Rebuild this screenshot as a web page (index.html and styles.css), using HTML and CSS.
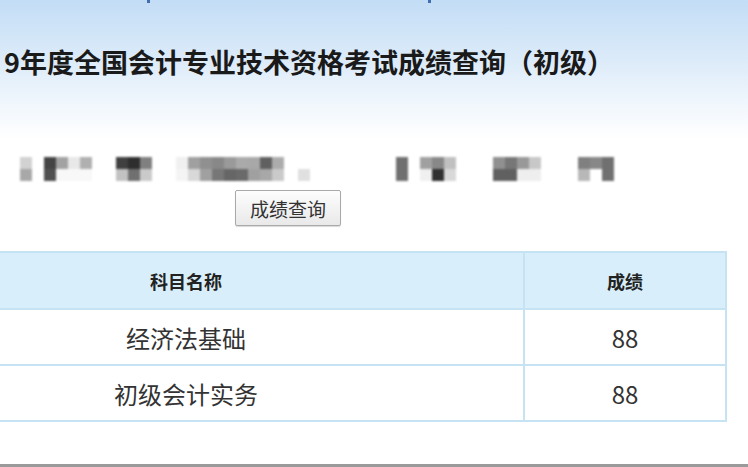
FILE: index.html
```html
<!DOCTYPE html>
<html lang="zh-CN">
<head>
    <meta charset="UTF-8">
    <meta name="viewport" content="width=device-width, initial-scale=1.0">
    <title>成绩查询</title>
    <link rel="stylesheet" href="styles.css">
</head>
<body>

    <div class="top">
        <div class="top-edge"></div>
        <h1 class="title">9年度全国会计专业技术资格考试成绩查询（初级）</h1>
    </div>

    <div class="query">
        <!-- 打码的考生信息 -->
        <svg class="mosaic" width="620" height="26" viewBox="0 0 620 26">
            <g>
                <rect x="20" y="1" width="12" height="12" fill="#d2d2d2"/>
                <rect x="20" y="13" width="12" height="12" fill="#a8a8a8"/>
                <rect x="44" y="1" width="12" height="12" fill="#444"/>
                <rect x="44" y="13" width="12" height="12" fill="#505050"/>
                <rect x="56" y="1" width="12" height="12" fill="#a2a2a2"/>
                <rect x="68" y="1" width="12" height="12" fill="#e8e8e8"/>
                <rect x="80" y="1" width="12" height="12" fill="#b0b0b0"/>
                <rect x="56" y="13" width="36" height="12" fill="#f8f8f8"/>

                <rect x="116" y="1" width="12" height="12" fill="#404040"/>
                <rect x="128" y="1" width="12" height="12" fill="#2e2e2e"/>
                <rect x="140" y="1" width="12" height="12" fill="#808080"/>
                <rect x="116" y="13" width="12" height="12" fill="#c2c2c2"/>
                <rect x="128" y="13" width="12" height="12" fill="#707070"/>
                <rect x="140" y="13" width="12" height="12" fill="#cacaca"/>

                <rect x="176" y="1" width="12" height="12" fill="#f0f0f0"/>
                <rect x="188" y="1" width="12" height="12" fill="#a0a0a0"/>
                <rect x="200" y="1" width="12" height="12" fill="#909090"/>
                <rect x="212" y="1" width="12" height="12" fill="#888"/>
                <rect x="224" y="1" width="12" height="12" fill="#9a9a9a"/>
                <rect x="236" y="1" width="12" height="12" fill="#aaa"/>
                <rect x="248" y="1" width="12" height="12" fill="#a8a8a8"/>
                <rect x="260" y="1" width="12" height="12" fill="#606060"/>
                <rect x="272" y="1" width="12" height="12" fill="#acacac"/>
                <rect x="176" y="13" width="12" height="12" fill="#f4f4f4"/>
                <rect x="188" y="13" width="12" height="12" fill="#d8d8d8"/>
                <rect x="200" y="13" width="12" height="12" fill="#a0a0a0"/>
                <rect x="212" y="13" width="12" height="12" fill="#777"/>
                <rect x="224" y="13" width="12" height="12" fill="#666"/>
                <rect x="236" y="13" width="12" height="12" fill="#6a6a6a"/>
                <rect x="248" y="13" width="12" height="12" fill="#a0a0a0"/>
                <rect x="260" y="13" width="12" height="12" fill="#a8a8a8"/>
                <rect x="272" y="13" width="12" height="12" fill="#cacaca"/>
                <rect x="298" y="13" width="12" height="12" fill="#e0e0e0"/>

                <rect x="396" y="1" width="12" height="24" fill="#707070"/>
                <rect x="420" y="1" width="12" height="12" fill="#a0a0a0"/>
                <rect x="432" y="1" width="12" height="12" fill="#888"/>
                <rect x="444" y="1" width="12" height="12" fill="#c0c0c0"/>
                <rect x="420" y="13" width="12" height="12" fill="#f0f0f0"/>
                <rect x="432" y="13" width="12" height="12" fill="#303030"/>
                <rect x="444" y="13" width="12" height="12" fill="#d8d8d8"/>

                <rect x="493" y="1" width="12" height="12" fill="#909090"/>
                <rect x="505" y="1" width="12" height="12" fill="#777"/>
                <rect x="517" y="1" width="12" height="12" fill="#999"/>
                <rect x="529" y="1" width="12" height="12" fill="#c8c8c8"/>
                <rect x="493" y="13" width="24" height="12" fill="#606060"/>
                <rect x="517" y="13" width="24" height="12" fill="#eee"/>

                <rect x="578" y="1" width="12" height="12" fill="#808080"/>
                <rect x="590" y="1" width="12" height="12" fill="#888"/>
                <rect x="602" y="1" width="12" height="24" fill="#707070"/>
                <rect x="578" y="13" width="12" height="12" fill="#b8b8b8"/>
            </g>
        </svg>
        <button class="btn">成绩查询</button>
    </div>

    <table class="scores">
        <thead>
            <tr>
                <th class="subject">科目名称</th>
                <th>成绩</th>
            </tr>
        </thead>
        <tbody>
            <tr>
                <td>经济法基础</td>
                <td>88</td>
            </tr>
            <tr>
                <td>初级会计实务</td>
                <td>88</td>
            </tr>
        </tbody>
    </table>

    <div class="footer-line"></div>

</body>
</html>
```

FILE: styles.css
```css
body {
    margin: 0;
    padding: 0;
    overflow: hidden;
    font-family: "Noto Sans CJK SC", "Liberation Sans", sans-serif;
    color: #222;
    background: #fff;
}
.top {
    height: 140px;
    background: linear-gradient(#c3ddf6 0, #dcebf9 60px, #f3f8fd 110px, #fff 140px);
}
.top-edge {
    margin-left: 147px;
    width: 278px;
    height: 3px;
    border-left: 3px solid #3f6fae;
    border-right: 3px solid #3f6fae;
}
.title {
    margin: 0;
    padding: 41px 0 0 4px;
    font-size: 27px;
    font-weight: bold;
    line-height: 36px;
    color: #1a1a1a;
}
.query {
    box-sizing: border-box;
    height: 111px;
    padding-top: 16px;
}
.mosaic {
    display: block;
    filter: blur(0.8px);
}
.btn {
    display: block;
    margin: 8px 0 0 235px;
    width: 106px;
    height: 36px;
    padding: 0;
    font-family: "Noto Sans CJK SC", sans-serif;
    font-size: 19px;
    color: #333;
    background: linear-gradient(#fdfdfd, #e9e9e9);
    border: 1px solid #a9a9a9;
    border-radius: 2px;
    box-shadow: 0 1px 1px rgba(0, 0, 0, 0.15);
}
.scores {
    margin-left: -153px;
    width: 880px;
    border-collapse: collapse;
    border: 2px solid #c5e3f2;
}
.scores th,
.scores td {
    border: 2px solid #c5e3f2;
    text-align: center;
    height: 54px;
    padding: 0;
}
.scores th {
    background-color: #d8eefa;
    font-size: 18px;
    font-weight: bold;
    color: #222;
    height: 55px;
}
.scores th.subject {
    width: 674px;
}
.scores td {
    font-size: 24px;
    color: #333;
}
.footer-line {
    margin-top: 42px;
    height: 3px;
    background-color: #9a9a9a;
}
```
